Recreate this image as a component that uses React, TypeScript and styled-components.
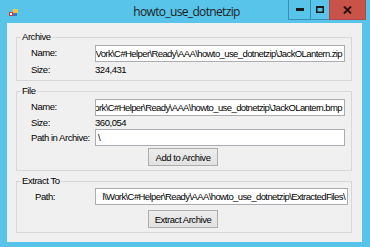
import React from 'react'
import styled, {createGlobalStyle} from 'styled-components'

const GlobalStyle = createGlobalStyle`
  html, body {
    margin: 0;
    padding: 0;
    background: #ffffff;
  }
`

const Frame = styled.div`
  width: 370px;
  height: 247px;
  box-sizing: border-box;
  background: #58c4ea;
  display: flex;
  flex-direction: column;
  padding: 0 8px 5px 7px;
  overflow: hidden;
`

const TitleBar = styled.div`
  height: 23px;
  flex: none;
  display: grid;
  grid-template-columns: 1fr auto 1fr;
  align-items: start;
  margin-right: -4px;
`

const AppIcon = styled.svg`
  margin: 8px 0 0 2px;
`

const Title = styled.div`
  font-family: 'Open Sans', 'Noto Sans', sans-serif;
  font-size: 12px;
  line-height: 23px;
  color: #1e1e1e;
  letter-spacing: -0.65px;
`

const Controls = styled.div`
  justify-self: end;
  display: flex;
`

const CaptionButton = styled.div<{$close?: boolean; $w: number}>`
  width: ${p => p.$w}px;
  height: 20px;
  box-sizing: border-box;
  display: flex;
  align-items: center;
  justify-content: center;
  background: ${p => (p.$close ? '#c9534b' : '#58c4ea')};
  border: 1px solid ${p => (p.$close ? '#b14842' : '#3b8fb0')};
  border-top: none;
  margin-left: -1px;
`

const Client = styled.div`
  flex: 1;
  min-height: 0;
  background: #f0f0f0;
  padding: 8px 10px 0 9px;
  display: flex;
  flex-direction: column;
  gap: 4px;
  font-family: 'Liberation Sans', Arial, sans-serif;
  font-size: 9.5px;
  letter-spacing: -0.45px;
  color: #000;
`

const Group = styled.fieldset<{$pl: number; $pr: number; $col: number}>`
  margin: 0;
  min-width: 0;
  border: 1px solid #d8d8d8;
  border-radius: 0;
  padding: 0 ${p => p.$pr}px 4px ${p => p.$pl}px;
  display: grid;
  grid-template-columns: ${p => p.$col}px minmax(0, 1fr);
  align-items: center;
`

const Legend = styled.legend<{$pl: number}>`
  padding: 0 1px;
  margin-left: ${p => 4 - p.$pl}px;
  line-height: 12px;
`

const Cell = styled.div<{$h: number}>`
  height: ${p => p.$h}px;
  line-height: ${p => p.$h}px;
  white-space: nowrap;
`

const TextBox = styled.div<{$left?: boolean}>`
  height: 17px;
  min-width: 0;
  box-sizing: border-box;
  border: 1px solid #abadb3;
  background: #fff;
  display: flex;
  justify-content: ${p => (p.$left ? 'flex-start' : 'flex-end')};
  align-items: center;
  overflow: hidden;
  white-space: nowrap;
  padding: 0 2px;
  letter-spacing: -0.6px;
`

const ButtonRow = styled.div<{$offset: number; $pt: number}>`
  grid-column: 1 / -1;
  display: flex;
  padding: ${p => p.$pt}px 0 0 ${p => p.$offset}px;
`

const Button = styled.div`
  width: 70px;
  height: 18px;
  box-sizing: border-box;
  border: 1px solid #adadad;
  background: linear-gradient(#ececec, #e2e2e2);
  display: flex;
  align-items: center;
  justify-content: center;
  white-space: nowrap;
`

export default function App() {
  return (
    <>
      <GlobalStyle />
      <Frame>
        <TitleBar>
          <AppIcon width="9" height="9" viewBox="0 0 9 9">
            <rect x="0" y="4" width="4" height="4" fill="#d8392c" />
            <rect x="4" y="1" width="5" height="4" fill="#f2c34b" />
            <rect x="4" y="5" width="4" height="3" fill="#3a78c8" />
            <rect x="1" y="5" width="2" height="2" fill="#fff" />
          </AppIcon>
          <Title>howto_use_dotnetzip</Title>
          <Controls>
            <CaptionButton $w={23}>
              <svg width="8" height="3" viewBox="0 0 8 3">
                <rect width="8" height="3" fill="#1a1a1a" />
              </svg>
            </CaptionButton>
            <CaptionButton $w={20}>
              <svg width="8" height="7" viewBox="0 0 8 7">
                <rect x="0.75" y="0.75" width="6.5" height="5.5" fill="none" stroke="#1a1a1a" strokeWidth="1.5" />
                <rect x="0" y="0" width="8" height="2" fill="#1a1a1a" />
              </svg>
            </CaptionButton>
            <CaptionButton $w={37} $close>
              <svg width="9" height="8" viewBox="0 0 9 8">
                <path d="M1 0.5 L8 7.5 M8 0.5 L1 7.5" stroke="#2a1010" strokeWidth="2" />
              </svg>
            </CaptionButton>
          </Controls>
        </TitleBar>
        <Client>
          <Group $pl={14} $pr={6} $col={64}>
            <Legend $pl={14}>Archive</Legend>
            <Cell $h={20}>Name:</Cell>
            <TextBox>Vork\C#Helper\Ready\AAA\howto_use_dotnetzip\JackOLantern.zip</TextBox>
            <Cell $h={13}>Size:</Cell>
            <Cell $h={13}>324,431</Cell>
          </Group>
          <Group $pl={14} $pr={6} $col={64}>
            <Legend $pl={14}>File</Legend>
            <Cell $h={20}>Name:</Cell>
            <TextBox>ork\C#Helper\Ready\AAA\howto_use_dotnetzip\JackOLantern.bmp</TextBox>
            <Cell $h={12}>Size:</Cell>
            <Cell $h={12}>360,054</Cell>
            <Cell $h={17}>Path in Archive:</Cell>
            <TextBox $left>\</TextBox>
            <ButtonRow $offset={117} $pt={2}>
              <Button>Add to Archive</Button>
            </ButtonRow>
          </Group>
          <Group $pl={18} $pr={3} $col={60}>
            <Legend $pl={18}>Extract To</Legend>
            <Cell $h={19}>Path:</Cell>
            <TextBox>l\Work\C#Helper\Ready\AAA\howto_use_dotnetzip\ExtractedFiles\</TextBox>
            <ButtonRow $offset={113} $pt={4}>
              <Button>Extract Archive</Button>
            </ButtonRow>
          </Group>
        </Client>
      </Frame>
    </>
  )
}
